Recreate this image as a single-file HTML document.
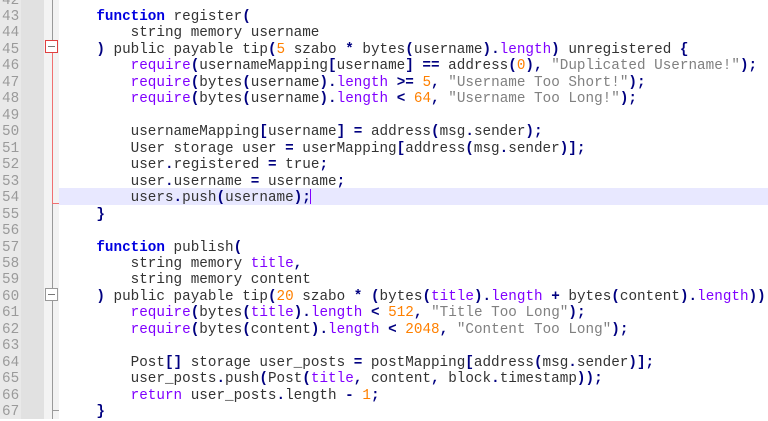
<!DOCTYPE html>
<html><head><meta charset="utf-8"><style>
html,body{margin:0;padding:0;width:768px;height:419px;overflow:hidden;background:#fff}
.g1{position:absolute;left:0;top:0;width:21px;height:419px;background:#e9e9e9}
.g2{position:absolute;left:21px;top:0;width:23px;height:419px;background:#e1e1e1}
.fm{position:absolute;left:44px;top:0;width:15px;height:419px;background:#f3f3f3}
.fl{position:absolute;left:52px;width:1px;background:#9a9a9a}
.box{position:absolute;left:45px;width:11px;height:11px;border:1px solid #999;background:#fff}
.box::after{content:"";position:absolute;left:2px;right:2px;top:5px;height:1px;background:#777}
.hl{position:absolute;left:59px;right:0;height:16.5px;background:#e8e8ff}
.ln,.code{position:absolute;top:-7.5px;font-family:"Liberation Mono",monospace;font-size:14.3px;line-height:16.47px;white-space:pre}
.ln{left:2px;color:#9a9a9a}
.code{left:62px;color:#333}
.k{color:#0000e0;font-weight:bold}
.p{color:#8000ff}
.o{color:#000080;font-weight:bold}
.s{color:#808080}
.n{color:#ff8000}
</style></head><body>
<div class="g1"></div><div class="g2"></div><div class="fm"></div>
<div class="hl" style="top:188px"></div>
<div class="fl" style="top:0;height:40px"></div>
<div class="fl" style="top:52px;height:152px;background:#f07070"></div>
<div style="position:absolute;left:52px;top:203px;width:7px;height:1px;background:#f07070"></div>
<div class="fl" style="top:204px;height:84px"></div>
<div class="fl" style="top:301px;height:118px"></div>
<div style="position:absolute;left:52px;top:410px;width:7px;height:1px;background:#9a9a9a"></div>
<div class="box" style="top:40px;border-color:#e04040"></div>
<div class="box" style="top:288px"></div>
<div style="position:absolute;left:310px;top:189px;width:1px;height:15px;background:#8000ff"></div>
<div class="ln">42
43
44
45
46
47
48
49
50
51
52
53
54
55
56
57
58
59
60
61
62
63
64
65
66
67</div>
<div class="code">
    <span class="k">function</span> register<span class="o">(</span>
        string memory username
    <span class="o">)</span> public payable tip<span class="o">(</span><span class="n">5</span> szabo <span class="o">*</span> bytes<span class="o">(</span>username<span class="o">).</span><span class="p">length</span><span class="o">)</span> unregistered <span class="o">{</span>
        <span class="p">require</span><span class="o">(</span>usernameMapping<span class="o">[</span>username<span class="o">]</span> <span class="o">==</span> address<span class="o">(</span><span class="n">0</span><span class="o">),</span> <span class="s">"Duplicated Username!"</span><span class="o">);</span>
        <span class="p">require</span><span class="o">(</span>bytes<span class="o">(</span>username<span class="o">).</span><span class="p">length</span> <span class="o">&gt;=</span> <span class="n">5</span><span class="o">,</span> <span class="s">"Username Too Short!"</span><span class="o">);</span>
        <span class="p">require</span><span class="o">(</span>bytes<span class="o">(</span>username<span class="o">).</span><span class="p">length</span> <span class="o">&lt;</span> <span class="n">64</span><span class="o">,</span> <span class="s">"Username Too Long!"</span><span class="o">);</span>

        usernameMapping<span class="o">[</span>username<span class="o">]</span> <span class="o">=</span> address<span class="o">(</span>msg<span class="o">.</span>sender<span class="o">);</span>
        User storage user <span class="o">=</span> userMapping<span class="o">[</span>address<span class="o">(</span>msg<span class="o">.</span>sender<span class="o">)];</span>
        user<span class="o">.</span>registered <span class="o">=</span> true<span class="o">;</span>
        user<span class="o">.</span>username <span class="o">=</span> username<span class="o">;</span>
        users<span class="o">.</span>push<span class="o">(</span>username<span class="o">);</span>
    <span class="o">}</span>

    <span class="k">function</span> publish<span class="o">(</span>
        string memory <span class="p">title</span><span class="o">,</span>
        string memory content
    <span class="o">)</span> public payable tip<span class="o">(</span><span class="n">20</span> szabo <span class="o">*</span> <span class="o">(</span>bytes<span class="o">(</span><span class="p">title</span><span class="o">).</span><span class="p">length</span> <span class="o">+</span> bytes<span class="o">(</span>content<span class="o">).</span><span class="p">length</span><span class="o">))</span>
        <span class="p">require</span><span class="o">(</span>bytes<span class="o">(</span><span class="p">title</span><span class="o">).</span><span class="p">length</span> <span class="o">&lt;</span> <span class="n">512</span><span class="o">,</span> <span class="s">"Title Too Long"</span><span class="o">);</span>
        <span class="p">require</span><span class="o">(</span>bytes<span class="o">(</span>content<span class="o">).</span><span class="p">length</span> <span class="o">&lt;</span> <span class="n">2048</span><span class="o">,</span> <span class="s">"Content Too Long"</span><span class="o">);</span>

        Post<span class="o">[]</span> storage user_posts <span class="o">=</span> postMapping<span class="o">[</span>address<span class="o">(</span>msg<span class="o">.</span>sender<span class="o">)];</span>
        user_posts<span class="o">.</span>push<span class="o">(</span>Post<span class="o">(</span><span class="p">title</span><span class="o">,</span> content<span class="o">,</span> block<span class="o">.</span>timestamp<span class="o">));</span>
        <span class="p">return</span> user_posts<span class="o">.</span>length <span class="o">-</span> <span class="n">1</span><span class="o">;</span>
    <span class="o">}</span></div>
</body></html>
